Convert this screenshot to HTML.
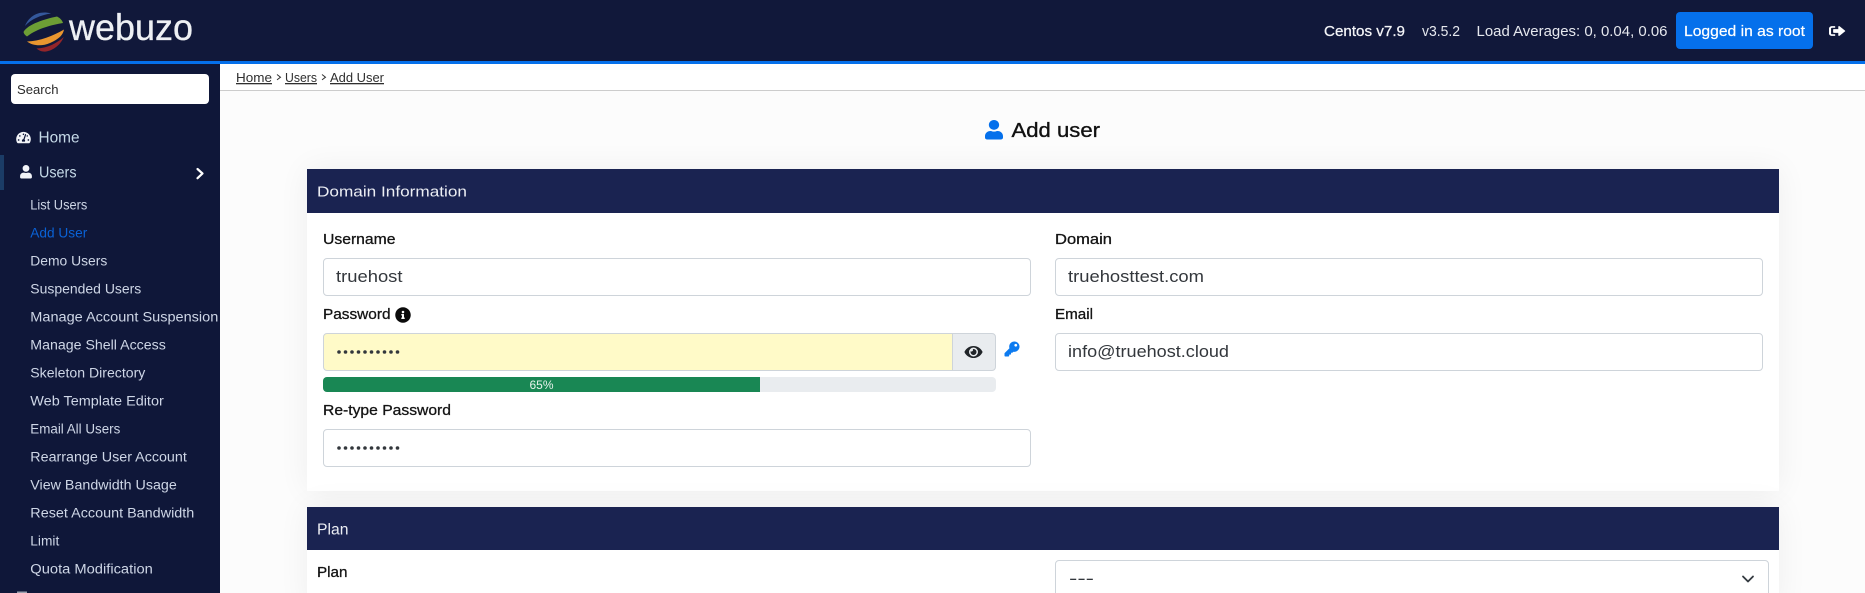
<!DOCTYPE html>
<html lang="en"><head><meta charset="utf-8"><title>Add User - Webuzo</title>
<style>
html,body{margin:0;padding:0;width:1865px;height:593px;overflow:hidden;background:#fcfcfc;font-family:"Liberation Sans",sans-serif}
#page{position:absolute;left:0;top:0;width:1865px;height:593px;overflow:hidden;background:#fcfcfc}
.a{position:absolute;box-sizing:border-box}
.inp{background:#fff;border:1px solid #ced4da;border-radius:4px}
svg.top{position:absolute;left:0;top:0}
text{font-family:"Liberation Sans",sans-serif}
.s{font-size:13.5px;fill:#ced6e6}
.v{font-size:16.5px;fill:#33373c}
</style></head><body>
<div id="page">
<div class="a" style="left:0;top:0;width:1865px;height:61px;background:#11183a"></div>
<div class="a" style="left:0;top:61px;width:1865px;height:3px;background:#0570eb"></div>
<div class="a" style="left:0;top:64px;width:220px;height:529px;background:#0f1739"></div>
<div class="a" style="left:0;top:155px;width:4px;height:35px;background:#1b3c66"></div>
<div class="a" style="left:11px;top:74px;width:198px;height:30px;background:#fff;border-radius:4px"></div>
<div class="a" style="left:220px;top:64px;width:1645px;height:27px;background:#fff;border-bottom:1px solid #ccc"></div>
<div class="a" style="left:1676px;top:12px;width:137px;height:37px;background:#0570eb;border-radius:4px"></div>

<div class="a" style="left:307px;top:169px;width:1472px;height:322px;background:#fff;box-shadow:0 0 30px rgba(0,0,0,.06)"></div>
<div class="a" style="left:307px;top:507px;width:1472px;height:100px;background:#fff;box-shadow:0 0 30px rgba(0,0,0,.06)"></div>
<div class="a" style="left:307px;top:169px;width:1472px;height:44px;background:#1a2351"></div>
<div class="a" style="left:307px;top:507px;width:1472px;height:43px;background:#1a2351"></div>

<div class="a inp" style="left:323px;top:258px;width:708px;height:38px"></div>
<div class="a inp" style="left:1055px;top:258px;width:708px;height:38px"></div>
<div class="a inp" style="left:1055px;top:333px;width:708px;height:38px"></div>
<div class="a inp" style="left:323px;top:429px;width:708px;height:38px"></div>
<div class="a inp" style="left:323px;top:333px;width:630px;height:38px;background:#fffac8;border-radius:4px 0 0 4px"></div>
<div class="a" style="left:952px;top:333px;width:44px;height:38px;background:#e9ecef;border:1px solid #ced4da;border-radius:0 4px 4px 0"></div>
<div class="a" style="left:323px;top:377px;width:673px;height:15px;background:#e9ecef;border-radius:4px;overflow:hidden"><div style="width:437px;height:15px;background:#198754"></div></div>
<div class="a inp" style="left:1055px;top:560px;width:714px;height:60px"></div>

<svg class="top" width="1865" height="593" viewBox="0 0 1865 593" xmlns="http://www.w3.org/2000/svg">
<!-- logo -->
<path d="M25 26C29 16 39 10 51 13.500C41 15 31 19 25 26Z" fill="#34589c"/>
<path d="M23.500 32C28 24 45 19 57 16.500C60 18 62 20 63 23C52 25 38 28 27 36.500C25 35 24 34 23.500 32Z" fill="#6d9e35"/>
<path d="M27 41.500C40 41 53 36 64 29.500C63 35 59 39 50 43C42 46.500 33 46 27 41.500Z" fill="#ea962f"/>
<path d="M36.500 48.500C48 48 57 43 63.800 37C60.500 45 53 50.500 46 51.500C42 52 39 50.500 36.500 48.500Z" fill="#93252a"/>
<text x="69" y="40" font-size="37" fill="#eef0f4" stroke="#eef0f4" stroke-width=".3" textLength="124" lengthAdjust="spacingAndGlyphs">webuzo</text>

<!-- top right -->
<text x="1324" y="36" font-size="14.500" fill="#f4f5f8" textLength="81" lengthAdjust="spacingAndGlyphs" stroke="#f4f5f8" stroke-width=".25">Centos v7.9</text>
<text x="1422" y="36" font-size="14.500" fill="#e6e8ee" textLength="38" lengthAdjust="spacingAndGlyphs">v3.5.2</text>
<text x="1476.500" y="36" font-size="14.500" fill="#e6e8ee" textLength="191" lengthAdjust="spacingAndGlyphs">Load Averages: 0, 0.04, 0.06</text>
<text x="1684" y="36" font-size="14.500" fill="#fff" textLength="121" lengthAdjust="spacingAndGlyphs" stroke="#fff" stroke-width=".2">Logged in as root</text>
<svg x="1829" y="24.500" width="16.500" height="13" viewBox="0 0 512 512" preserveAspectRatio="none"><path fill="#fff" d="M497 273L329 441c-15 15-41 4.500-41-17v-96H152c-13.300 0-24-10.700-24-24v-96c0-13.300 10.700-24 24-24h136V88c0-21.400 25.900-32 41-17l168 168c9.300 9.400 9.300 24.600 0 34zM192 436v-40c0-6.600-5.400-12-12-12H96c-17.700 0-32-14.300-32-32V160c0-17.700 14.300-32 32-32h84c6.600 0 12-5.400 12-12V76c0-6.600-5.400-12-12-12H96c-53 0-96 43-96 96v192c0 53 43 96 96 96h84c6.600 0 12-5.400 12-12z"/></svg>

<!-- sidebar -->
<text x="17" y="94" font-size="13" fill="#2b2b2b" textLength="41.500" lengthAdjust="spacingAndGlyphs">Search</text>
<svg x="16" y="131" width="15" height="13" viewBox="0 0 576 512"><path fill="#f2f4f8" d="M288 32C128.940 32 0 160.940 0 320c0 52.800 14.250 102.260 39.060 144.800 5.610 9.620 16.300 15.200 27.440 15.200h443c11.140 0 21.830-5.580 27.440-15.200C561.750 422.260 576 372.800 576 320c0-159.060-128.940-288-288-288zm0 64c14.710 0 26.580 10.130 30.320 23.650-1.110 2.260-2.640 4.230-3.450 6.670l-9.220 27.670c-5.130 3.490-10.970 6.010-17.640 6.010-17.670 0-32-14.330-32-32S270.330 96 288 96zM96 384c-17.670 0-32-14.330-32-32s14.330-32 32-32 32 14.330 32 32-14.330 32-32 32zm48-160c-17.670 0-32-14.330-32-32s14.330-32 32-32 32 14.330 32 32-14.330 32-32 32zm246.770-72.410l-61.330 184C343.130 347.330 352 364.540 352 384c0 11.720-3.380 22.550-8.880 32H232.880c-5.500-9.450-8.880-20.280-8.880-32 0-33.940 26.500-61.430 59.900-63.590l61.340-184.010c4.170-12.560 17.730-19.450 30.360-15.170 12.570 4.190 19.350 17.770 15.170 30.360zm14.660 57.200l15.520-46.550c3.470-1.290 7.130-2.230 11.050-2.230 17.670 0 32 14.330 32 32s-14.330 32-32 32c-11.380-.01-20.890-6.270-26.570-15.220zM480 384c-17.670 0-32-14.330-32-32s14.330-32 32-32 32 14.330 32 32-14.330 32-32 32z"/></svg>
<text x="38.500" y="142.500" font-size="15.500" fill="#c6dae8" textLength="41" lengthAdjust="spacingAndGlyphs">Home</text>
<svg x="20" y="165" width="12" height="13.500" viewBox="0 0 448 512"><path fill="#f2f4f8" d="M224 256c70.700 0 128-57.300 128-128S294.700 0 224 0 96 57.300 96 128s57.300 128 128 128zm89.600 32h-16.700c-22.200 10.200-46.900 16-72.900 16s-50.600-5.800-72.900-16h-16.700C60.200 288 0 348.200 0 422.400V464c0 26.500 21.500 48 48 48h352c26.500 0 48-21.500 48-48v-41.600c0-74.200-60.200-134.400-134.400-134.400z"/></svg>
<text x="39" y="177.500" font-size="15.500" fill="#c6dae8" textLength="37.500" lengthAdjust="spacingAndGlyphs">Users</text>
<path d="M197.500 169l5 4.500-5 4.700" fill="none" stroke="#fff" stroke-width="2.200" stroke-linecap="round" stroke-linejoin="round"/>

<g transform="translate(0 .7)">
<text class="s" x="30.300" y="209" textLength="57" lengthAdjust="spacingAndGlyphs">List Users</text>
<text class="s" x="30.300" y="237" textLength="57" lengthAdjust="spacingAndGlyphs" style="fill:#0a62d6">Add User</text>
<text class="s" x="30.300" y="265" textLength="77" lengthAdjust="spacingAndGlyphs">Demo Users</text>
<text class="s" x="30.300" y="293" textLength="111" lengthAdjust="spacingAndGlyphs">Suspended Users</text>
<text class="s" x="30.300" y="321" textLength="188" lengthAdjust="spacingAndGlyphs">Manage Account Suspension</text>
<text class="s" x="30.300" y="349" textLength="135.500" lengthAdjust="spacingAndGlyphs">Manage Shell Access</text>
<text class="s" x="30.300" y="377" textLength="115" lengthAdjust="spacingAndGlyphs">Skeleton Directory</text>
<text class="s" x="30.300" y="405" textLength="133.500" lengthAdjust="spacingAndGlyphs">Web Template Editor</text>
<text class="s" x="30.300" y="433" textLength="90" lengthAdjust="spacingAndGlyphs">Email All Users</text>
<text class="s" x="30.300" y="461" textLength="156.500" lengthAdjust="spacingAndGlyphs">Rearrange User Account</text>
<text class="s" x="30.300" y="489" textLength="146.500" lengthAdjust="spacingAndGlyphs">View Bandwidth Usage</text>
<text class="s" x="30.300" y="517" textLength="164" lengthAdjust="spacingAndGlyphs">Reset Account Bandwidth</text>
<text class="s" x="30.300" y="545" textLength="29" lengthAdjust="spacingAndGlyphs">Limit</text>
<text class="s" x="30.300" y="573" textLength="122.500" lengthAdjust="spacingAndGlyphs">Quota Modification</text>
</g>
<rect x="17" y="591.500" width="10" height="1.500" fill="#9aa0ae"/>

<!-- breadcrumb -->
<g font-size="13" fill="#2f2f2f">
<text x="236" y="82" text-decoration="underline" textLength="36" lengthAdjust="spacingAndGlyphs">Home</text>
<path d="M277 74.500l3.500 2.700-3.500 2.700M322 74.500l3.500 2.700-3.500 2.700" fill="none" stroke="#333" stroke-width="1"/>
<text x="285" y="82" text-decoration="underline" textLength="32" lengthAdjust="spacingAndGlyphs">Users</text>
<text x="330" y="82" text-decoration="underline" textLength="54" lengthAdjust="spacingAndGlyphs">Add User</text>
</g>

<!-- title -->
<svg x="985" y="120" width="18" height="19.500" viewBox="0 0 448 512" preserveAspectRatio="none"><path fill="#0570eb" d="M224 256c70.700 0 128-57.300 128-128S294.700 0 224 0 96 57.300 96 128s57.300 128 128 128zm89.600 32h-16.700c-22.200 10.200-46.900 16-72.900 16s-50.600-5.800-72.900-16h-16.700C60.200 288 0 348.200 0 422.400V464c0 26.500 21.500 48 48 48h352c26.500 0 48-21.500 48-48v-41.600c0-74.200-60.200-134.400-134.400-134.400z"/></svg>
<text x="1011.500" y="137" font-size="20.500" fill="#111" textLength="88.500" lengthAdjust="spacingAndGlyphs" stroke="#111" stroke-width=".35">Add user</text>

<!-- panel headings -->
<text x="317" y="196.500" font-size="15" fill="#eceef4" textLength="150" lengthAdjust="spacingAndGlyphs">Domain Information</text>
<text x="317" y="534.500" font-size="15.500" fill="#eceef4" textLength="31.500" lengthAdjust="spacingAndGlyphs">Plan</text>

<!-- labels -->
<g font-size="15" fill="#141414" stroke="#141414" stroke-width=".3">
<text x="323" y="244" textLength="72.500" lengthAdjust="spacingAndGlyphs">Username</text>
<text x="1055" y="244" textLength="57" lengthAdjust="spacingAndGlyphs">Domain</text>
<text x="323" y="319" textLength="67.500" lengthAdjust="spacingAndGlyphs">Password</text>
<text x="1055" y="319" textLength="38" lengthAdjust="spacingAndGlyphs">Email</text>
<text x="323" y="415" textLength="128" lengthAdjust="spacingAndGlyphs">Re-type Password</text>
<text x="317" y="577" textLength="30.500" lengthAdjust="spacingAndGlyphs">Plan</text>
</g>
<svg x="395" y="307" width="16" height="16" viewBox="0 0 512 512"><path fill="#0b0b0b" d="M256 8C119 8 8 119 8 256s111 248 248 248 248-111 248-248S393 8 256 8zm0 110c23.200 0 42 18.800 42 42s-18.800 42-42 42-42-18.800-42-42 18.800-42 42-42zm56 254c0 6.600-5.400 12-12 12h-88c-6.600 0-12-5.400-12-12v-24c0-6.600 5.400-12 12-12h12v-64h-12c-6.600 0-12-5.400-12-12v-24c0-6.600 5.400-12 12-12h64c6.600 0 12 5.400 12 12v100h12c6.600 0 12 5.400 12 12v24z"/></svg>

<!-- values -->
<text class="v" x="336" y="282" textLength="66.500" lengthAdjust="spacingAndGlyphs">truehost</text>
<text class="v" x="1068" y="282" textLength="136" lengthAdjust="spacingAndGlyphs">truehosttest.com</text>
<text class="v" x="1068" y="357" textLength="161" lengthAdjust="spacingAndGlyphs">info@truehost.cloud</text>
<g fill="#33373c">
<circle cx="339" cy="352" r="1.800"/><circle cx="345.500" cy="352" r="1.800"/><circle cx="352" cy="352" r="1.800"/><circle cx="358.500" cy="352" r="1.800"/><circle cx="365" cy="352" r="1.800"/><circle cx="371.500" cy="352" r="1.800"/><circle cx="378" cy="352" r="1.800"/><circle cx="384.500" cy="352" r="1.800"/><circle cx="391" cy="352" r="1.800"/><circle cx="397.500" cy="352" r="1.800"/>
<circle cx="339" cy="448" r="1.800"/><circle cx="345.500" cy="448" r="1.800"/><circle cx="352" cy="448" r="1.800"/><circle cx="358.500" cy="448" r="1.800"/><circle cx="365" cy="448" r="1.800"/><circle cx="371.500" cy="448" r="1.800"/><circle cx="378" cy="448" r="1.800"/><circle cx="384.500" cy="448" r="1.800"/><circle cx="391" cy="448" r="1.800"/><circle cx="397.500" cy="448" r="1.800"/>
</g>
<svg x="964.500" y="344" width="18" height="16" viewBox="0 0 576 512"><path fill="#212529" d="M572.520 241.400C518.290 135.590 410.930 64 288 64S57.680 135.640 3.480 241.410a32.350 32.350 0 0 0 0 29.190C57.710 376.410 165.070 448 288 448s230.320-71.640 284.520-177.410a32.350 32.350 0 0 0 0-29.190zM288 400a144 144 0 1 1 144-144 143.930 143.930 0 0 1-144 144zm0-240a95.310 95.310 0 0 0-25.310 3.790 47.850 47.850 0 0 1-66.900 66.900A95.780 95.780 0 1 0 288 160z"/></svg>
<svg x="1004.500" y="341.500" width="15" height="15" viewBox="0 0 512 512"><path fill="#0d7bf0" d="M512 176.001C512 273.203 433.202 352 336 352c-11.220 0-22.190-1.062-32.827-3.069l-24.012 27.014A23.999 23.999 0 0 1 261.223 384H224v40c0 13.255-10.745 24-24 24h-40v40c0 13.255-10.745 24-24 24H24c-13.255 0-24-10.745-24-24v-78.059c0-6.365 2.529-12.470 7.029-16.971l161.802-161.802C163.108 213.814 160 195.271 160 176 160 78.798 238.797.001 335.999 0 433.488-.001 512 78.511 512 176.001zM336 128c0 26.510 21.490 48 48 48s48-21.490 48-48-21.490-48-48-48-48 21.490-48 48z"/></svg>
<text x="529.500" y="389" font-size="12" fill="#e8f2ec" textLength="24" lengthAdjust="spacingAndGlyphs">65%</text>
<text x="1069" y="584" font-size="16.500" fill="#33373c" textLength="25" lengthAdjust="spacingAndGlyphs">---</text>
<path d="M1743 576.500l5 5 5-5" fill="none" stroke="#343a40" stroke-width="1.800" stroke-linecap="round" stroke-linejoin="round"/>
</svg>
</div>
</body></html>
